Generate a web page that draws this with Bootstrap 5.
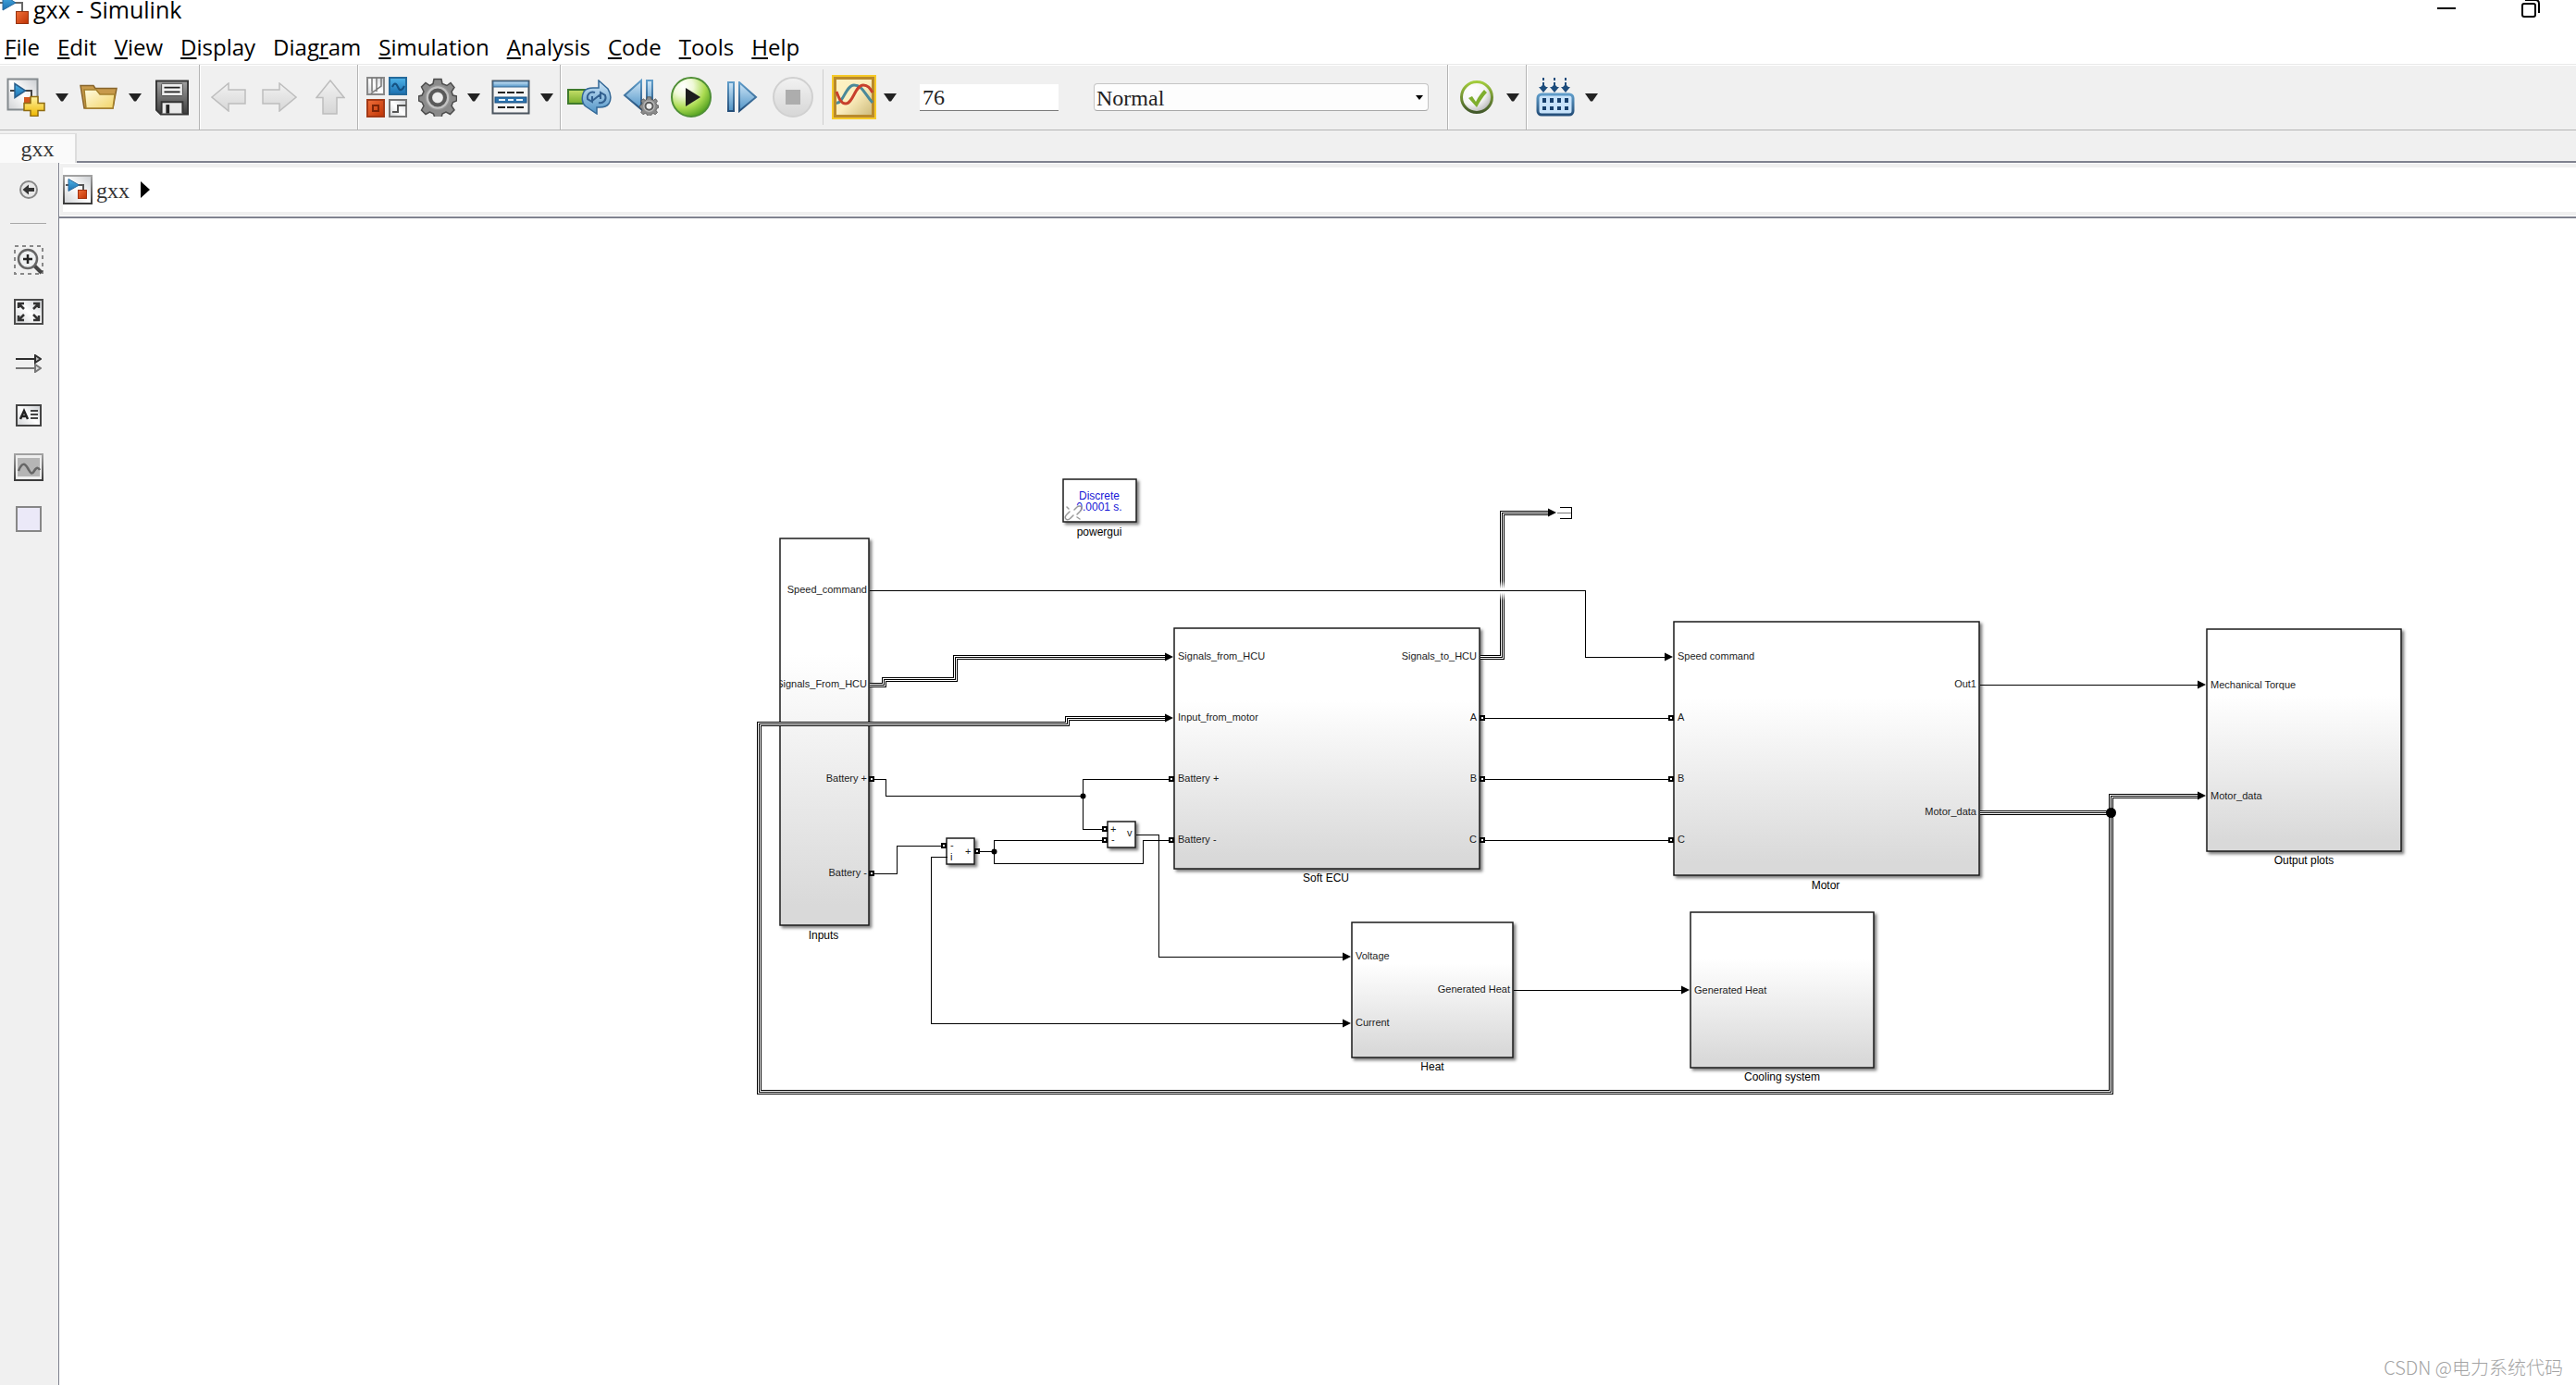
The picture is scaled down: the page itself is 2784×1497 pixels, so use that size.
<!DOCTYPE html>
<html lang="en">
<head>
<meta charset="utf-8">
<meta name="viewport" content="width=device-width, initial-scale=1">
<title>gxx - Simulink</title>
<link href="https://cdn.jsdelivr.net/npm/bootstrap@5.3.0/dist/css/bootstrap.min.css" rel="stylesheet">
<style>
  body { background: #fff; color: #000; font-family: "Open Sans", "Noto Sans", sans-serif; font-size: 24px; }
  .chrome { background: #f0f0f0; }
  .titlebar { height: 32px; line-height: 21px; font-size: 25px; }
  .titlebar svg { display: block; }
  .win-buttons { gap: 71px; padding-right: 39px; }
  .win-btn { border: 0; background: none; padding: 0; line-height: 0; }
  .menus { height: 37px; gap: 19px; padding-left: 5px; line-height: 37px; }
  .menus a { color: #000; text-decoration: none; }
  .menus u { text-decoration-thickness: 2px; text-underline-offset: 2px; text-decoration-skip-ink: none; }
  .toolstrip { height: 72px; border-top: 1px solid #e8e8e8; border-bottom: 1px solid #b4b4b4; box-shadow: inset 0 1px #fff; }
  .tool-group { padding: 0 2px 0 3px; border-right: 1px solid #b4b4b4; box-shadow: 1px 0 #fff; }
  .tool-group:first-child { padding-left: 0; }
  .tool-group:last-child { border: 0; box-shadow: none; }
  .tool, .drop { border: 0; background: none; padding: 0; display: flex; align-items: center; justify-content: center; height: 100%; }
  .tool { width: 55px; }
  .drop { width: 24px; }
  .light-rule { width: 1px; height: 60px; background: #cfcfcf; margin: 0 5px; }
  .sim { font-family: "Liberation Serif", "Noto Sans CJK SC", serif; font-size: 24px; color: #222; }
  .stop-time { width: 150px; height: 29px; margin-left: 20px; padding: 2px 3px 0; border: 0; border-bottom: 1px solid #7a7a7a; border-radius: 0; background: #fff; line-height: 26px; }
  .mode-pick { appearance: none; width: 362px; height: 30px; margin: 0 18px 0 38px; padding: 2px 2px 0; border: 1px solid #c4c4c4; border-bottom-color: #a8a8a8; border-radius: 4px; line-height: 26px; background: #fdfdfd url("data:image/svg+xml,%3Csvg xmlns='http://www.w3.org/2000/svg' viewBox='0 0 8 5'%3E%3Cpath d='M0 0h8L4 5z'/%3E%3C/svg%3E") no-repeat right 5px center / 8px 5px; }
  .tabs { height: 35px; border-bottom: 2px solid #7f828f; }
  .model-tab { width: 83px; height: 32px; margin-bottom: -2px; background: #fafafa; border-top: 1px solid #ddd; border-right: 2px solid #ddd; color: #333; line-height: 32px; text-decoration: none; }
  .palette { width: 63px; padding: 1px 1px 0 0; }
  .palette button { border: 0; background: none; width: 100%; height: 56px; padding: 0; display: flex; align-items: center; justify-content: center; }
  .palette hr { width: 39px; margin: 8px 0 11px 11px; border-top: 1px solid #a8a8a8; opacity: 1; }
  .editor { border-left: 1px solid #7f828f; }
  .crumbs { height: 60px; padding: 1px 0 1px 1px; border-bottom: 2px solid #7f828f; }
  .crumbs nav { border: 4px solid #f0f0f0; border-width: 4px 0 4px 3px; gap: 4px; }
  .crumbs a { color: #333; text-decoration: none; line-height: 48px; padding-top: 2px; }
  .sheet { font-family: "Liberation Sans", Arial, sans-serif; }
  .blk { fill: url(#shade); stroke: #1c1c1c; stroke-width: 1.5; filter: url(#drop); }
  .plain { fill: #fff; }
  .wire { fill: none; stroke: #000; stroke-width: 1; shape-rendering: crispEdges; }
  .bus-o { stroke-width: 5; }
  .bus-m { stroke: #fff; stroke-width: 3; }
  .pt { font-size: 11px; fill: #1c1c1c; }
  .nm { font-size: 12px; fill: #000; text-anchor: middle; }
  .re { text-anchor: end; }
  .watermark { right: 14px; bottom: 7px; font-family: "Noto Sans CJK SC", sans-serif; font-size: 20px; line-height: 24px; color: #a3a3a3; font-weight: 300; }
</style>
<script src="https://cdn.jsdelivr.net/npm/bootstrap@5.3.0/dist/js/bootstrap.bundle.min.js"></script>
</head>
<body class="d-flex flex-column min-vh-100 overflow-hidden">

<svg width="0" height="0" class="position-absolute" aria-hidden="true">
  <defs>
    <linearGradient id="metal" x1="0" y1="0" x2="0" y2="1"><stop offset="0" stop-color="#a2a2a2"/><stop offset="1" stop-color="#3c3c3c"/></linearGradient>
    <linearGradient id="paper" x1="1" y1="0" x2="0" y2="1"><stop offset="0" stop-color="#c9ccd0"/><stop offset=".5" stop-color="#fff"/><stop offset="1" stop-color="#cfd1d4"/></linearGradient>
    <linearGradient id="blue" x1="0" y1="0" x2="0" y2="1"><stop offset="0" stop-color="#cfe6f7"/><stop offset="1" stop-color="#4f93c6"/></linearGradient>
    <linearGradient id="edge" x1="0" y1="0" x2="0" y2="1"><stop offset="0" stop-color="#5f9cc9"/><stop offset="1" stop-color="#254f7a"/></linearGradient>
    <linearGradient id="deep" x1="0" y1="0" x2="0" y2="1"><stop offset="0" stop-color="#4fb4e8"/><stop offset="1" stop-color="#1a6fb0"/></linearGradient>
    <linearGradient id="red" x1="0" y1="0" x2="1" y2="1"><stop offset="0" stop-color="#f0703a"/><stop offset="1" stop-color="#bf3304"/></linearGradient>
    <linearGradient id="gold" x1="0" y1="0" x2="0" y2="1"><stop offset="0" stop-color="#fff3a0"/><stop offset="1" stop-color="#eeb700"/></linearGradient>
    <linearGradient id="folder" x1="0" y1="0" x2="1" y2="1"><stop offset="0" stop-color="#fffbe0"/><stop offset="1" stop-color="#f2d467"/></linearGradient>
    <linearGradient id="ghost" x1="0" y1="0" x2="0" y2="1"><stop offset="0" stop-color="#f2f2f2"/><stop offset="1" stop-color="#d6d6d6"/></linearGradient>
    <linearGradient id="leaf" x1="0" y1="0" x2="0" y2="1"><stop offset="0" stop-color="#c6df6a"/><stop offset="1" stop-color="#77ae2c"/></linearGradient>
    <radialGradient id="go" cx=".3" cy=".22" r=".85"><stop offset="0" stop-color="#fff"/><stop offset=".3" stop-color="#f0f9d8"/><stop offset=".65" stop-color="#acdc52"/><stop offset="1" stop-color="#4b9c1c"/></radialGradient>
    <radialGradient id="ball" cx=".35" cy=".3" r=".8"><stop offset="0" stop-color="#fff"/><stop offset=".55" stop-color="#f4f4f4"/><stop offset="1" stop-color="#a8a8a8"/></radialGradient>
    <linearGradient id="rim" x1="0" y1="0" x2="0" y2="1"><stop offset="0" stop-color="#a3cc3d"/><stop offset="1" stop-color="#42582a"/></linearGradient>
    <linearGradient id="amber" x1="0" y1="0" x2="1" y2="1"><stop offset="0" stop-color="#fff3c4"/><stop offset=".5" stop-color="#fbedbd"/><stop offset="1" stop-color="#cbb878"/></linearGradient>
    <symbol id="caret" viewBox="0 0 14 9"><path d="M0 0h14L8 8.500H6z" fill="#222"/></symbol>
    <symbol id="model" viewBox="0 0 32 32">
      <rect x="1" y="1" width="30" height="30" fill="url(#paper)" stroke="url(#metal)" stroke-width="2"/>
      <path d="M3 11h3M17 11h5v7" fill="none" stroke="#555" stroke-width="2"/>
      <path d="M6 4.500v13L17.500 11z" fill="url(#deep)" stroke="#2a699c"/>
      <rect x="16.500" y="16.500" width="9" height="9" fill="url(#red)" stroke="#a43310"/>
    </symbol>
    <symbol id="cog" viewBox="0 0 42 42">
      <path d="M17 1.500h8l1 5 5 2 4-3 4 5-3 4.500 1.500 4 4 1v5l-4 1.500-1.500 4 3 4.500-4.500 4.500-4.500-2.500-4 2-1 4.500h-7l-1.500-4.500-4-2-4.500 2.500-4.500-4.500 2.500-4.500-2-4-3.500-1.500v-5l3.500-1 2-4-2.500-5L8 5.500l4.500 3L16 6.500z" fill="#8a8a8a" stroke="#4c4c4c" stroke-width="1.500"/>
      <circle cx="21" cy="21.500" r="13" fill="#c2c2c2" stroke="#959595" stroke-width="1.500"/>
      <circle cx="21" cy="21.500" r="8" fill="none" stroke="#5a5a5a" stroke-width="4"/>
      <circle cx="21" cy="21.500" r="5.500" fill="#eee"/>
    </symbol>
  </defs>
</svg>

<header>
  <div class="titlebar d-flex align-items-start justify-content-between">
    <div class="d-flex align-items-start gap-1">
      <svg width="32" height="27" viewBox="0 0 32 27" aria-hidden="true">
        <path d="M0 3h24v9" fill="none" stroke="#666" stroke-width="2"/>
        <path d="M3-6v17L17 3z" fill="url(#deep)" stroke="#2a699c"/>
        <rect x="17.500" y="12.500" width="13" height="13" fill="url(#red)" stroke="#96330f"/>
      </svg>
      <span>gxx - Simulink</span>
    </div>
    <div class="win-buttons d-flex align-items-start">
      <button class="win-btn" aria-label="Minimize"><svg width="20" height="20"><path d="M0 9h20" stroke="#000" stroke-width="2"/></svg></button>
      <button class="win-btn" aria-label="Restore"><svg width="20" height="20" fill="none" stroke="#000" stroke-width="2"><rect x="1" y="4" width="14" height="14" rx="2"/><path d="M4 0h11q4 0 4 4v10"/></svg></button>
    </div>
  </div>

  <nav class="menus d-flex" aria-label="Menu bar">
    <a href="#"><u>F</u>ile</a><a href="#"><u>E</u>dit</a><a href="#"><u>V</u>iew</a><a href="#"><u>D</u>isplay</a><a href="#">Diag<u>r</u>am</a><a href="#"><u>S</u>imulation</a><a href="#"><u>A</u>nalysis</a><a href="#"><u>C</u>ode</a><a href="#"><u>T</u>ools</a><a href="#"><u>H</u>elp</a>
  </nav>

  <div class="toolstrip chrome d-flex" role="toolbar" aria-label="Model toolbar">
    <div class="tool-group d-flex">
      <button class="tool" aria-label="New model"><svg width="42" height="42" viewBox="0 0 42 42"><rect x="1.500" y="1.500" width="32" height="33" fill="url(#paper)" stroke="#848a8e" stroke-width="2"/><path d="M4 14h5M20 14h7v8" fill="none" stroke="#444" stroke-width="2"/><path d="M9 6.500v15L20.500 14z" fill="url(#deep)" stroke="#2a5f8c" stroke-width="1.500"/><path d="M19 21h7v7h-7z" fill="#d4571e"/><path d="M26 20.500h8v7h7v8h-7v6h-8v-6h-7v-8h7z" fill="url(#gold)" stroke="#8f6b10" stroke-width="1.500"/></svg></button>
      <button class="drop" aria-label="New options"><svg width="14" height="9"><use href="#caret"/></svg></button>
      <button class="tool" aria-label="Open"><svg width="42" height="28" viewBox="0 0 42 28"><path d="M1 1.500h14l2 3h23L36 26H5z" fill="#c79a4c" stroke="#87642a" stroke-width="1.500"/><path d="M5 6h13l4 5h16l-2 15H7z" fill="url(#folder)" stroke="#a5802c" stroke-width="1.500"/></svg></button>
      <button class="drop" aria-label="Open options"><svg width="14" height="9"><use href="#caret"/></svg></button>
      <button class="tool" aria-label="Save"><svg width="36" height="39" viewBox="0 0 38 40"><path d="M1 1h36v38H6l-5-5z" fill="url(#metal)" stroke="#333" stroke-width="2"/><rect x="7" y="4" width="24" height="14" rx="1" fill="#eee" stroke="#444"/><path d="M10 8.500h18M10 13.500h18" stroke="#222" stroke-width="2"/><path d="M7 38V25h24v13" fill="#e9e9e9" stroke="#333" stroke-width="2"/><path d="M12 28h4v10h-4z" fill="#222"/></svg></button>
    </div>
    <div class="tool-group d-flex">
      <button class="tool" aria-label="Back" disabled><svg width="38" height="32" viewBox="0 0 38 32"><path d="M1 16 19 1v7h18v15H19v8z" fill="url(#ghost)" stroke="#bdbdbd" stroke-width="1.500"/></svg></button>
      <button class="tool" aria-label="Forward" disabled><svg width="38" height="32" viewBox="0 0 38 32"><path d="M37 16 19 1v7H1v15h18v8z" fill="url(#ghost)" stroke="#bdbdbd" stroke-width="1.500"/></svg></button>
      <button class="tool" aria-label="Up to parent" disabled><svg width="32" height="38" viewBox="0 0 32 38"><path d="M16 1 1 19.500h7V37h15V19.500h8z" fill="url(#ghost)" stroke="#bdbdbd" stroke-width="1.500"/></svg></button>
    </div>
    <div class="tool-group d-flex">
      <button class="tool" aria-label="Library browser"><svg width="44" height="44" viewBox="0 0 44 44"><rect x="1" y="1" width="18" height="18" fill="url(#paper)" stroke="#888" stroke-width="2"/><path d="M6 1v15M11 1v15M16 1v9L5 18" fill="none" stroke="#777" stroke-width="1.500"/><rect x="25" y="1" width="18" height="18" fill="url(#deep)" stroke="#256a9b" stroke-width="2"/><path d="M28 11q3-7 6 0t7-1" fill="none" stroke="#155080" stroke-width="2"/><rect x="1" y="25" width="18" height="18" fill="url(#red)" stroke="#a33a17" stroke-width="2"/><rect x="7" y="31" width="6" height="6" fill="none" stroke="#7c2407" stroke-width="2"/><rect x="25" y="25" width="18" height="18" fill="url(#paper)" stroke="#777" stroke-width="2"/><path d="M28 38h6v-7h9" fill="none" stroke="#555" stroke-width="2"/></svg></button>
      <button class="tool" aria-label="Configuration"><svg width="42" height="42"><use href="#cog"/></svg></button>
      <button class="drop" aria-label="Configuration options"><svg width="14" height="9"><use href="#caret"/></svg></button>
      <button class="tool" aria-label="Model explorer"><svg width="42" height="38" viewBox="0 0 42 38"><rect x="1.500" y="1.500" width="39" height="35" fill="#f5f5f5" stroke="#4a545e" stroke-width="2"/><path d="M2 2h38v6H2z" fill="url(#blue)" stroke="#3e6f99"/><path d="M7 14h8m2 0h8m2 0h8M7 30h8m2 0h8m2 0h8" stroke="#222" stroke-width="2"/><rect x="4" y="19" width="34" height="6" fill="#2b72ad" stroke="#1b4e7e"/><path d="M8 22h7m3 0h6m3 0h7" stroke="#e6f3ff" stroke-width="2"/></svg></button>
      <button class="drop" aria-label="Explorer options"><svg width="14" height="9"><use href="#caret"/></svg></button>
    </div>
    <div class="tool-group d-flex align-items-center">
      <button class="tool" aria-label="Update diagram"><svg width="48" height="38" viewBox="0 0 48 38"><rect x="1" y="11" width="22" height="15" fill="url(#leaf)" stroke="#3f7a2c" stroke-width="2"/><path d="M34 1l10 9c3 5 4 11 1 16-2 3-6 4-10 4h-3v7L20 29c-4-3-5-10-2-16 2-3 6-4 10-4h6z" fill="url(#blue)" stroke="#336897" stroke-width="1.500"/><path d="M30 14c-5-2-9 2-8 7l5 3v-6M34 25c5 1 9-3 7-8l-5-3v7M27 23l9-7" fill="none" stroke="#315f8f" stroke-width="2"/></svg></button>
      <button class="tool" aria-label="Step back"><svg width="42" height="42" viewBox="-2 0 42 42"><path d="M20 3v31L2 19z" fill="url(#blue)" stroke="url(#edge)" stroke-width="2"/><path d="M26 3h6v30h-6z" fill="url(#blue)" stroke="url(#edge)" stroke-width="2"/><svg x="18" y="20" width="21" height="21"><use href="#cog"/></svg></svg></button>
      <button class="tool" aria-label="Run"><svg width="46" height="46" viewBox="0 0 46 46"><circle cx="23" cy="23" r="21" fill="url(#go)" stroke="#4f8f35" stroke-width="2"/><path d="M17 13v20l16-10z" fill="#1d1d1d"/></svg></button>
      <button class="tool" aria-label="Step forward"><svg width="34" height="34" viewBox="0 0 34 34"><path d="M2 1h6v31H2zM14 1v31L32 17z" fill="url(#blue)" stroke="url(#edge)" stroke-width="2"/></svg></button>
      <button class="tool" aria-label="Stop" disabled><svg width="46" height="46" viewBox="0 0 46 46"><circle cx="23" cy="23" r="21" fill="url(#ghost)" stroke="#d0d0d0" stroke-width="2"/><path d="M15 15h16v16H15z" fill="#adadad"/></svg></button>
      <span class="light-rule"></span>
      <button class="tool" aria-label="Data inspector"><svg width="48" height="48" viewBox="0 0 48 48"><rect x="1" y="1" width="46" height="46" fill="none" stroke="#f6ca2a" stroke-width="2"/><rect x="3.500" y="3.500" width="41" height="41" fill="url(#amber)" stroke="#b98a2c" stroke-width="3"/><path d="M5 30c7 2 10-19 19-19s11 9 20 19" fill="none" stroke="#4a8999" stroke-width="3"/><path d="M5 18c3 8 5 13 10 13 8 0 10-20 19-20 5 0 7 3 10 8" fill="none" stroke="#c8402c" stroke-width="3"/></svg></button>
      <button class="drop" aria-label="Inspector options"><svg width="14" height="9"><use href="#caret"/></svg></button>
      <label class="visually-hidden" for="stop">Stop time</label>
      <input id="stop" class="stop-time sim" type="text" value="76">
      <label class="visually-hidden" for="mode">Simulation mode</label>
      <select id="mode" class="mode-pick sim"><option>Normal</option></select>
    </div>
    <div class="tool-group d-flex">
      <button class="tool" aria-label="Model advisor"><svg width="38" height="38" viewBox="0 0 38 38"><circle cx="19" cy="19" r="16.500" fill="url(#ball)" stroke="url(#rim)" stroke-width="3"/><path d="M10 20l4-2 4 6c3-6 6-10 9-13l3 3c-4 4-7 9-11 16z" fill="#7fae2e"/></svg></button>
      <button class="drop" aria-label="Advisor options"><svg width="14" height="9"><use href="#caret"/></svg></button>
    </div>
    <div class="tool-group d-flex">
      <button class="tool" aria-label="Build model"><svg width="42" height="42" viewBox="0 0 42 42"><path d="M8 0v3m0 2v6M20 0v3m0 2v6M32 0v3m0 2v6" stroke="#1c4c7c" stroke-width="2"/><path d="M3 10h2l3-3 3 3h2l-5 6zM15 10h2l3-3 3 3h2l-5 6zM27 10h2l3-3 3 3h2l-5 6z" fill="#1c4c7c"/><rect x="2" y="18" width="38" height="22" rx="4" fill="#c7e2fa" stroke="url(#edge)" stroke-width="3"/><path d="M7 22h4v5H7zm8 0h4v5h-4zm8 0h4v5h-4zm8 0h4v5h-4zM7 31h4v4H7zm8 0h4v4h-4zm8 0h4v4h-4zm8 0h4v4h-4z" fill="#163f6c"/></svg></button>
      <button class="drop" aria-label="Build options"><svg width="14" height="9"><use href="#caret"/></svg></button>
    </div>
  </div>

  <div class="tabs chrome d-flex align-items-end">
    <a href="#" class="model-tab sim text-center">gxx</a>
  </div>
</header>

<main class="d-flex flex-grow-1">
  <aside class="palette chrome flex-shrink-0" aria-label="Palette">
    <button aria-label="Hide browser"><svg width="22" height="22" viewBox="0 0 22 22"><circle cx="11" cy="11" r="9" fill="#e8e8e8" stroke="#888" stroke-width="2"/><path d="M4.500 11 11 5.500V9h6v4h-6v3.500z" fill="#333"/></svg></button>
    <hr>
    <button aria-label="Zoom"><svg width="32" height="32" viewBox="0 0 32 32"><path d="M1 1h30v30H1z" fill="none" stroke="#888" stroke-width="2" stroke-dasharray="4 4"/><path d="m22 22 8 8" stroke="#444" stroke-width="4"/><circle cx="15" cy="15" r="10" fill="#eef0f1" stroke="#666" stroke-width="2.500"/><path d="M10 15h10M15 10v10" stroke="#222" stroke-width="2.500"/></svg></button>
    <button aria-label="Fit to view"><svg width="32" height="28" viewBox="0 0 32 28"><rect x="1" y="1" width="30" height="26" fill="url(#paper)" stroke="#4c4c4c" stroke-width="2"/><path d="M5 10V5h6M5 5l6 6M21 5h6v5M27 5l-6 6M5 18v5h6M5 23l6-6M21 23h6v-5M27 23l-6-6" fill="none" stroke="#333" stroke-width="2.500"/></svg></button>
    <button aria-label="Signal"><svg width="28" height="20" viewBox="0 0 28 20" fill="none" stroke-width="2"><g stroke="#777"><path d="M0 15h22"/><path d="m21 11 6 4-6 4z" fill="#ddd"/></g><g stroke="#2e2e2e"><path d="M0 5h22"/><path d="m21 1 6 4-6 4z" fill="#bbb"/></g></svg></button>
    <button aria-label="Annotation"><svg width="28" height="24" viewBox="0 0 28 24"><rect x="1" y="1" width="26" height="22" fill="url(#paper)" stroke="#444" stroke-width="2"/><path d="M5 16 9 7l4 9M6 13h6" fill="none" stroke="#222" stroke-width="2.500"/><path d="M16 7h8m-8 4h8m-8 4h8" stroke="#444" stroke-width="2"/></svg></button>
    <button aria-label="Image"><svg width="32" height="30" viewBox="0 0 32 30"><rect x="1" y="1" width="30" height="28" fill="#eee" stroke="url(#metal)" stroke-width="2"/><path d="M4 5h24v20H4z" fill="#b5b5b5"/><path d="M5 19c4-10 7-8 10-3s4 8 7 3 5-3 6-1" fill="none" stroke="#666" stroke-width="2.500"/></svg></button>
    <button aria-label="Area"><svg width="28" height="28" viewBox="0 0 28 28"><path d="M1 1h26v26H1z" fill="#ebe9f8" stroke="#878787" stroke-width="2"/></svg></button>
  </aside>

  <section class="editor d-flex flex-column flex-grow-1 position-relative">
    <div class="crumbs d-flex">
      <nav class="d-flex flex-grow-1 align-items-center sim" aria-label="Model path">
        <svg width="32" height="32" aria-hidden="true"><use href="#model"/></svg>
        <a href="#">gxx</a>
        <svg class="ms-2" width="10" height="18" aria-hidden="true"><path d="M0 0v18L10 9z"/></svg>
      </nav>
    </div>

    <svg class="sheet flex-grow-1 w-100" role="img" aria-label="Block diagram of model gxx">
      <defs>
        <linearGradient id="shade" x1="0" y1="0" x2="0" y2="1"><stop offset="0" stop-color="#fff"/><stop offset=".3" stop-color="#fff"/><stop offset=".95" stop-color="#d9d9d9"/></linearGradient>
        <linearGradient id="fade" x1="0" y1="0" x2="0" y2="1"><stop offset="0" stop-color="#fff" stop-opacity="0"/><stop offset=".4" stop-color="#fff"/><stop offset=".6" stop-color="#fff"/><stop offset="1" stop-color="#fff" stop-opacity="0"/></linearGradient>
        <filter id="drop" x="-20%" y="-20%" width="150%" height="150%"><feDropShadow dx="2.500" dy="2.500" stdDeviation="1.500" flood-color="#000" flood-opacity=".5"/></filter>
        <clipPath id="inBox"><rect x="843" y="582" width="97" height="419"/></clipPath>
        <path id="tip" d="M-9-4.500v9L0 0z"/>
        <g id="port"><path d="M-3-3h6v6h-6z"/><path d="M-1-1h2v2h-2z" fill="#fff"/></g>
        <path id="b1" d="M940 740.500H955.500V734.500H1032.500V710.500H1260"/>
        <path id="b2" d="M2281.500 878.500V1180.500H820.500V782.500H1153.500V776.500H1260"/>
        <path id="b3" d="M1600 710.500H1623.500V554.500H1675"/>
        <path id="b4" d="M2140 878.500H2281.500V860.500H2377"/>
      </defs>
      <g transform="translate(-64 -236)">
        <rect class="blk" x="843" y="582" width="96" height="418"/>
        <rect class="blk plain" x="1149" y="518" width="79" height="46"/>
        <rect class="blk" x="1269" y="679" width="330" height="260"/>
        <rect class="blk" x="1809" y="672" width="330" height="274"/>
        <rect class="blk" x="1827" y="986" width="198" height="168"/>
        <rect class="blk" x="2385" y="680" width="210" height="240"/>
        <rect class="blk" x="1461" y="997" width="174" height="146"/>
        <rect class="blk plain" x="1023" y="906" width="30" height="28"/>
        <rect class="blk plain" x="1197" y="888" width="30" height="28"/>

        <g class="wire">
          <use href="#b1" class="bus-o"/><use href="#b1" class="bus-m"/><use href="#b1"/>
          <use href="#b2" class="bus-o"/><use href="#b2" class="bus-m"/><use href="#b2"/>
          <use href="#b3" class="bus-o"/><use href="#b3" class="bus-m"/><use href="#b3"/>
          <use href="#b4" class="bus-o"/><use href="#b4" class="bus-m"/><use href="#b4"/>
        </g>
        <rect x="1619" y="628" width="9" height="21" fill="url(#fade)"/>
        <g class="wire">
          <path d="M940 638.500H1713.500V710.500H1802"/>
          <path d="M944 842.500H957.500V860.500H1170.500M1264 842.500H1170.500V896.500H1192"/>
          <path d="M944 944.500H969.500V914.500H1018"/>
          <path d="M1058 920.500H1074.500M1192 908.500H1074.500V933.500H1235.500V908.500H1264"/>
          <path d="M1228 902.500H1252.500V1034.500H1453"/>
          <path d="M1024 926.500H1006.500V1106.500H1453"/>
          <path d="M1604 776.500H1804M1604 842.500H1804M1604 908.500H1804"/>
          <path d="M1636 1070.500H1820M2140 740.500H2378"/>
          <path d="M1686 548.500H1698.500V560.500H1686"/>
          <path d="M1683 554.500H1698" stroke="#777"/>
        </g>
        <circle cx="1170.500" cy="860.500" r="3"/><circle cx="1074.500" cy="920.500" r="3"/><circle cx="2281.500" cy="878.500" r="5.500"/>
        <use href="#tip" x="1268" y="710"/><use href="#tip" x="1268" y="776"/><use href="#tip" x="1682" y="554"/>
        <use href="#tip" x="1808" y="710"/><use href="#tip" x="1826" y="1070"/><use href="#tip" x="2384" y="740"/><use href="#tip" x="2384" y="860"/>
        <use href="#tip" x="1460" y="1034"/><use href="#tip" x="1460" y="1106"/>
        <use href="#port" x="942" y="842"/><use href="#port" x="942" y="944"/>
        <use href="#port" x="1266" y="842"/><use href="#port" x="1266" y="908"/>
        <use href="#port" x="1602" y="776"/><use href="#port" x="1602" y="842"/><use href="#port" x="1602" y="908"/>
        <use href="#port" x="1806" y="776"/><use href="#port" x="1806" y="842"/><use href="#port" x="1806" y="908"/>
        <use href="#port" x="1020" y="914"/><use href="#port" x="1056" y="920"/>
        <use href="#port" x="1194" y="896"/><use href="#port" x="1194" y="908"/>

        <g class="pt">
          <g class="re" clip-path="url(#inBox)"><text x="937" y="641">Speed_command</text><text x="937" y="743">Signals_From_HCU</text><text x="937" y="845">Battery +</text><text x="937" y="947">Battery -</text></g>
          <text x="1273" y="713">Signals_from_HCU</text><text x="1273" y="779">Input_from_motor</text><text x="1273" y="845">Battery +</text><text x="1273" y="911">Battery -</text>
          <g class="re"><text x="1596" y="713">Signals_to_HCU</text><text x="1596" y="779">A</text><text x="1596" y="845">B</text><text x="1596" y="911">C</text></g>
          <text x="1813" y="713">Speed command</text><text x="1813" y="779">A</text><text x="1813" y="845">B</text><text x="1813" y="911">C</text>
          <g class="re"><text x="2136" y="743">Out1</text><text x="2136" y="881">Motor_data</text></g>
          <text x="2389" y="744">Mechanical Torque</text><text x="2389" y="864">Motor_data</text>
          <text x="1465" y="1037">Voltage</text><text x="1465" y="1109">Current</text><text class="re" x="1632" y="1073">Generated Heat</text>
          <text x="1831" y="1074">Generated Heat</text>
          <text x="1200" y="900">+</text><text x="1201" y="911">-</text><text x="1218" y="904">v</text>
          <text x="1027" y="917">-</text><text x="1027" y="930">i</text><text x="1043" y="924">+</text>
        </g>
        <g class="nm">
          <text x="890" y="1015">Inputs</text><text x="1188" y="579">powergui</text><text x="1433" y="953">Soft ECU</text><text x="1973" y="961">Motor</text>
          <text x="1926" y="1168">Cooling system</text><text x="2490" y="934">Output plots</text><text x="1548" y="1157">Heat</text>
          <g fill="#1616d6"><text x="1188" y="540">Discrete</text><text x="1188" y="552">0.0001 s.</text></g>
        </g>
        <g fill="none" stroke-linecap="round">
          <path d="M1154 559l10-9" stroke="#fff" stroke-width="7"/>
          <path d="M1153 556q-3 3-1 5 2 2 5-1l3-3M1153 556l3-3M1161 551l3-3q3-2 5 0 1 2-2 5l-3 3M1153 548l2 2M1164 559l3 2" stroke="#999" stroke-width="1.500"/>
        </g>
      </g>
    </svg>
    <div class="watermark position-absolute">CSDN @电力系统代码</div>
  </section>
</main>
</body>
</html>
